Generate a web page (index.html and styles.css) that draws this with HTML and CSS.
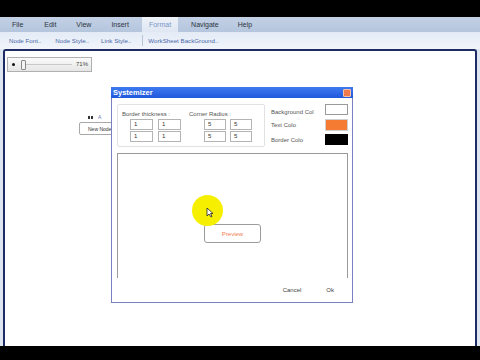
FILE: index.html
```html
<!DOCTYPE html>
<html>
<head>
<meta charset="utf-8">
<link rel="stylesheet" href="styles.css">
</head>
<body>
<div class="app">
  <div class="letterbox-top"></div>
  <div class="menubar">
    <span class="menu m-file">File</span>
    <span class="menu m-edit">Edit</span>
    <span class="menu m-view">View</span>
    <span class="menu m-insert">Insert</span>
    <span class="menu m-format active">Format</span>
    <span class="menu m-nav">Navigate</span>
    <span class="menu m-help">Help</span>
  </div>
  <div class="toolbar">
    <span class="tool t1">Node Font..</span>
    <span class="tool t2">Node Style..</span>
    <span class="tool t3">Link Style..</span>
    <span class="sep"></span>
    <span class="tool t4">WorkSheet BackGround..</span>
  </div>
  <div class="stage">
    <div class="canvas">
      <div class="zoombar">
        <span class="zdot"></span>
        <span class="zthumb"></span>
        <span class="ztrack"></span>
        <span class="zval">71%</span>
      </div>
      <div class="node-marks"><span class="sq"></span><span class="sq"></span><span class="tri">A</span></div>
      <div class="node">New Node</div>

      <div class="dialog">
        <div class="titlebar">
          <span class="title">Systemizer</span>
          <span class="close"></span>
        </div>
        <div class="dbody">
          <div class="toprow">
            <div class="group">
              <div class="sect s1">
                <div class="lbl">Border thickness :</div>
                <div class="inputs">
                  <span class="inp">1</span><span class="inp">1</span>
                  <span class="inp">1</span><span class="inp">1</span>
                </div>
              </div>
              <div class="sect s2">
                <div class="lbl">Corner Radius :</div>
                <div class="inputs">
                  <span class="inp">5</span><span class="inp">5</span>
                  <span class="inp">5</span><span class="inp">5</span>
                </div>
              </div>
            </div>
            <div class="colors">
              <div class="crow"><span class="clbl">Background Col</span><span class="sw sw-white"></span></div>
              <div class="crow"><span class="clbl">Text Colo</span><span class="sw sw-orange"></span></div>
              <div class="crow"><span class="clbl">Border Colo</span><span class="sw sw-black"></span></div>
            </div>
          </div>
          <div class="preview">
            <div class="pbtn">Preview</div>
          </div>
          <div class="footer">
            <span class="fbtn">Cancel</span>
            <span class="fbtn">Ok</span>
          </div>
        </div>
      </div>

      <div class="spot"></div>
      <svg class="cursor" width="8" height="11" viewBox="0 0 8 11"><path d="M1 1 L1 9 L3 7 L5 10 L6 9.5 L4.5 6.5 L7 6.5 Z" fill="#fff" stroke="#222" stroke-width="0.8"/></svg>
    </div>
  </div>
  <div class="letterbox-bottom"></div>
</div>
</body>
</html>
```
FILE: styles.css
```css
html, body {
  margin: 0;
  padding: 0;
  background: #000;
}
.app {
  width: 480px;
  height: 360px;
  display: flex;
  flex-direction: column;
  font-family: "Liberation Sans", Arial, sans-serif;
  overflow: hidden;
}
.letterbox-top { height: 17px; background: #000; flex: none; }
.letterbox-bottom { height: 14px; background: #000; flex: none; }

.menubar {
  height: 15px;
  flex: none;
  background: linear-gradient(#c3d1e5, #b4c5dd);
  display: flex;
  align-items: stretch;
  font-size: 7px;
  color: #2c3440;
}
.menu {
  display: flex;
  align-items: center;
  white-space: nowrap;
}
.m-file { margin-left: 12px; }
.m-edit { margin-left: 21px; }
.m-view { margin-left: 20px; }
.m-insert { margin-left: 20px; }
.m-format { margin-left: 13px; }
.m-nav { margin-left: 13px; }
.m-help { margin-left: 19px; }
.menu.active {
  background: linear-gradient(#eef2f8, #dfe7f3);
  color: #7a96c6;
  padding: 0 7px;
}

.toolbar {
  height: 17px;
  flex: none;
  background: linear-gradient(#e4ebf6, #f1f4fa);
  display: flex;
  align-items: center;
  font-size: 6.2px;
  color: #4a68a8;
}
.tool { white-space: nowrap; }
.t1 { margin-left: 9px; }
.t2 { margin-left: 14px; }
.t3 { margin-left: 12px; }
.sep {
  width: 1px;
  height: 11px;
  background: #b7c3d8;
  margin-left: 11px;
}
.t4 { margin-left: 5px; }

.stage {
  flex: 1;
  background: #dde5f1;
  padding: 0 3px;
  display: flex;
}
.canvas {
  flex: 1;
  position: relative;
  background: #fff;
  border: 2px solid #1d2a64;
  border-bottom: none;
  border-radius: 3px 3px 0 0;
}

.zoombar {
  position: absolute;
  left: 2px;
  top: 6px;
  width: 83px;
  height: 13px;
  border: 1px solid #b0b0b0;
  background: linear-gradient(#fafafa, #e6e6e6);
  font-size: 6px;
  color: #444;
}
.zdot {
  position: absolute;
  left: 4px; top: 5px;
  width: 3px; height: 3px;
  border-radius: 50%;
  background: #111;
}
.zthumb {
  position: absolute;
  left: 13px; top: 2px;
  width: 3px; height: 8px;
  border: 1px solid #888;
  background: #f4f4f4;
  border-radius: 1px;
}
.ztrack {
  position: absolute;
  left: 18px; top: 6px;
  width: 46px; height: 1px;
  background: #c8c8c8;
}
.zval {
  position: absolute;
  left: 68px; top: 3px;
}

.node-marks {
  position: absolute;
  left: 83px;
  top: 63px;
  display: flex;
  align-items: center;
  gap: 1px;
}
.node-marks .sq { width: 2px; height: 3px; background: #333; }
.node-marks .tri { font-size: 5px; color: #6a7ab0; margin-left: 4px; }
.node {
  position: absolute;
  left: 74px;
  top: 71px;
  width: 40px;
  height: 13px;
  border: 1px solid #a8a8a8;
  border-radius: 2px;
  font-size: 5px;
  color: #333;
  display: flex;
  align-items: center;
  padding-left: 8px;
  box-sizing: border-box;
  background: #fff;
}

.dialog {
  position: absolute;
  left: 106px;
  top: 36px;
  width: 242px;
  height: 216px;
  box-sizing: border-box;
  border: 1px solid #7a7fc2;
  border-top: none;
  background: #fff;
  display: flex;
  flex-direction: column;
}
.titlebar {
  height: 11px;
  flex: none;
  margin: 0 -1px;
  background: linear-gradient(#3e7bf0, #1f58dc);
  display: flex;
  align-items: center;
  justify-content: space-between;
  padding: 0 2px 0 2px;
}
.title {
  color: #fff;
  font-weight: bold;
  font-size: 7.5px;
  font-family: "Liberation Sans", Arial, sans-serif;
}
.close {
  width: 6px;
  height: 6px;
  background: #ee7a4e;
  border: 1px solid #f6c0a8;
  border-radius: 1px;
}
.dbody {
  flex: 1;
  display: flex;
  flex-direction: column;
  padding: 6px 4px 0 5px;
}
.toprow {
  display: flex;
  justify-content: space-between;
}
.group {
  width: 148px;
  height: 43px;
  box-sizing: border-box;
  border: 1px solid #e2e2e2;
  border-radius: 2px;
  display: flex;
  padding: 6px 0 0 4px;
  font-size: 6px;
  color: #555;
}
.sect .lbl { height: 8px; line-height: 6px; white-space: nowrap; }
.s1 { width: 67px; }
.inputs {
  display: grid;
  grid-template-columns: 23px 23px;
  column-gap: 5px;
  row-gap: 1px;
}
.s1 .inputs { margin-left: 8px; }
.s2 .inputs { margin-left: 15px; grid-template-columns: 22px 22px; column-gap: 4px; }
.inp {
  height: 11px;
  box-sizing: border-box;
  border: 1px solid #b4b4b4;
  font-size: 6px;
  color: #333;
  padding-left: 3px;
  line-height: 9px;
}
.colors {
  width: 77px;
  display: flex;
  flex-direction: column;
  gap: 4px;
}
.crow {
  display: flex;
  justify-content: space-between;
  align-items: center;
  height: 11px;
  font-size: 6px;
  color: #555;
}
.crow:first-child .clbl { margin-top: 5px; }
.sw {
  width: 23px;
  height: 11px;
  box-sizing: border-box;
}
.sw-white { border: 1px solid #9a9a9a; background: #fff; }
.sw-orange { background: #f67b32; height: 12px; border: 1px solid #d0d0d0; }
.sw-black { background: #000; }

.preview {
  margin-top: 6px;
  height: 125px;
  border: 1px solid #9a9a9a;
  border-bottom: none;
  display: flex;
  justify-content: center;
  align-items: flex-start;
  padding-top: 70px;
  box-sizing: border-box;
}
.pbtn {
  width: 57px;
  height: 19px;
  box-sizing: border-box;
  border: 1px solid #9c9c9c;
  border-radius: 3px;
  font-size: 6px;
  color: #f08050;
  display: flex;
  align-items: center;
  justify-content: center;
}
.footer {
  display: flex;
  justify-content: flex-end;
  gap: 25px;
  padding: 9px 14px 0 0;
  font-size: 6px;
  color: #444;
}

.spot {
  position: absolute;
  left: 187px;
  top: 144px;
  width: 31px;
  height: 31px;
  border-radius: 50%;
  background: #f6f000;
}
.cursor {
  position: absolute;
  left: 201px;
  top: 156px;
}
```
